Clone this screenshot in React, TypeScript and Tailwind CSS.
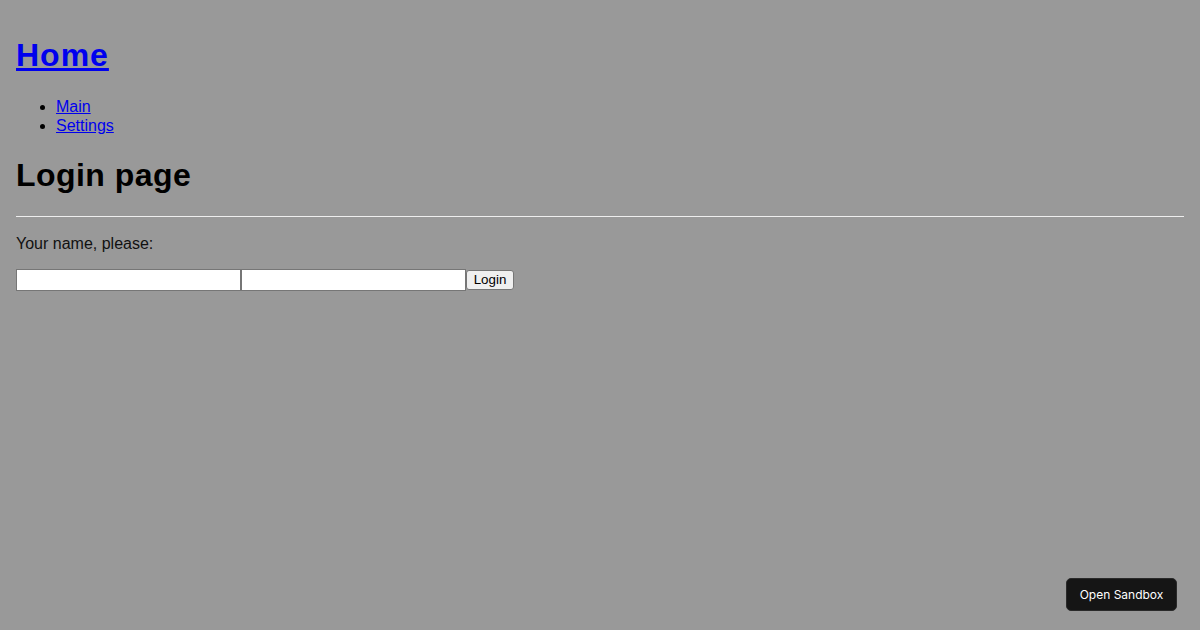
export default function App() {
  return (
    <div className="relative h-[630px] overflow-hidden bg-[#999999] px-4 pt-[37px] font-['Liberation_Sans',Arial,sans-serif] text-black">
      {/* header */}
      <h1 className="text-[32px] font-bold leading-[37px] tracking-[1px]">
        <a href="#" className="text-[#0000ee] underline">
          Home
        </a>
      </h1>
      <ul className="mt-[23px] list-disc pl-10 text-base leading-[19px]">
        <li>
          <a href="#" className="text-[#0000ee] underline">
            Main
          </a>
        </li>
        <li>
          <a href="#" className="text-[#0000ee] underline">
            Settings
          </a>
        </li>
      </ul>

      {/* page */}
      <h2 className="mt-[22px] text-[32px] font-bold leading-[37px] tracking-[0.45px]">Login page</h2>
      <hr className="mt-[22px] border-0 border-t border-[#eeeeee]" />
      <p className="mt-[17px] text-base leading-[19px] text-[#111111]">Your name, please:</p>
      <form className="mt-[16px] flex items-center" onSubmit={(e) => e.preventDefault()}>
        <input
          type="text"
          className="h-[22px] w-[225px] border border-[#767676] bg-white px-[2px] text-[13.33px] outline-none"
        />
        <input
          type="password"
          className="h-[22px] w-[225px] border border-[#767676] bg-white px-[2px] text-[13.33px] outline-none"
        />
        <button
          type="submit"
          className="h-[20px] w-[48px] rounded-[3px] border border-[#767676] bg-[#efefef] text-[13.33px] leading-[16px] text-black"
        >
          Login
        </button>
      </form>

      {/* floating sandbox button */}
      <button className="absolute bottom-[19px] right-[23px] h-[33px] w-[111px] rounded-[5px] border border-[#2a2a2a] bg-[#151515] pt-px font-['Inter',sans-serif] text-[12px] text-white">
        Open Sandbox
      </button>
    </div>
  );
}
